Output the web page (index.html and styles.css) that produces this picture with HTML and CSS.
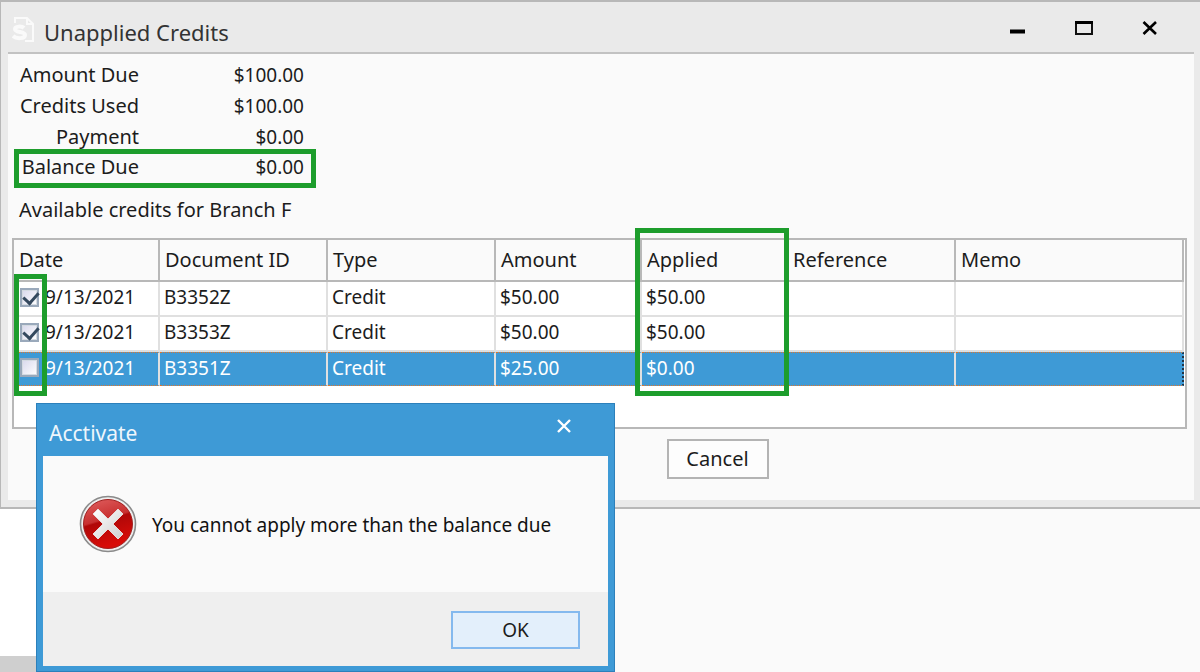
FILE: index.html
```html
<!DOCTYPE html>
<html lang="en">
<head>
  <meta charset="UTF-8" />
  <meta name="viewport" content="width=device-width, initial-scale=1.0"/>
  <title>Unapplied Credits</title>
  <link rel="stylesheet" href="styles.css">
</head>
<body>
  <div class="window">
    <div class="titlebar">
      <svg class="app-icon" width="24" height="28" viewBox="0 0 24 28" fill="none" stroke="#fafafa">
        <path d="M3 7V2h12l6 6v17h-8" stroke-width="2"/>
        <path d="M15 2v6h6" stroke-width="2"/>
        <path d="M12 12c-2-2-9-2-9 1 0 4 10 2 10 6 0 4-9 4-12 1" stroke-width="4"/>
      </svg>
      <h1>Unapplied Credits</h1>
      <div class="controls">
        <button type="button" aria-label="Minimize">
          <svg width="16" height="16"><path d="M0 11.5h15" stroke="#000" stroke-width="4"/></svg>
        </button>
        <button type="button" aria-label="Maximize">
          <svg width="18" height="16"><path d="M1 2v12h16V2" fill="none" stroke="#111" stroke-width="2"/><path d="M0 2.5h18" stroke="#000" stroke-width="3"/></svg>
        </button>
        <button type="button" aria-label="Close">
          <svg width="16" height="16"><path d="M1.5 2l12.500 12M14 2L1.500 14" stroke="#000" stroke-width="2.6"/></svg>
        </button>
      </div>
    </div>

    <div class="content">
      <dl class="summary">
        <div><dt>Amount Due</dt><dd>$100.00</dd></div>
        <div><dt>Credits Used</dt><dd>$100.00</dd></div>
        <div><dt>Payment</dt><dd>$0.00</dd></div>
        <div class="balance"><dt>Balance Due</dt><dd>$0.00</dd></div>
      </dl>
      <p class="caption">Available credits for Branch F</p>

      <div class="grid">
        <table>
          <colgroup>
            <col class="narrow"><col class="wide"><col class="wide"><col class="narrow"><col class="narrow"><col class="wide"><col>
          </colgroup>
          <thead>
            <tr><th>Date</th><th>Document ID</th><th>Type</th><th>Amount</th><th>Applied</th><th>Reference</th><th>Memo</th></tr>
          </thead>
          <tbody>
            <tr>
              <td><label><input type="checkbox" checked>9/13/2021</label></td>
              <td>B3352Z</td><td>Credit</td><td>$50.00</td><td>$50.00</td><td></td><td></td>
            </tr>
            <tr>
              <td><label><input type="checkbox" checked>9/13/2021</label></td>
              <td>B3353Z</td><td>Credit</td><td>$50.00</td><td>$50.00</td><td></td><td></td>
            </tr>
            <tr class="selected">
              <td><label><input type="checkbox">9/13/2021</label></td>
              <td>B3351Z</td><td>Credit</td><td>$25.00</td><td>$0.00</td><td></td><td></td>
            </tr>
          </tbody>
        </table>
        <span class="mark mark-checks"></span>
        <span class="mark mark-applied"></span>
      </div>

      <div class="actions">
        <button type="button" class="btn">Cancel</button>
      </div>
    </div>
  </div>

  <div class="backdrop"><span></span></div>

  <div class="dialog" role="alertdialog" aria-labelledby="dialog-title">
    <div class="dialog-title">
      <h2 id="dialog-title">Acctivate</h2>
      <button type="button" aria-label="Close">
        <svg width="16" height="16"><path d="M2 2l12 12M14 2L2 14" stroke="#fff" stroke-width="2.4"/></svg>
      </button>
    </div>
    <div class="dialog-body">
      <svg width="58" height="58" viewBox="0 0 58 58">
        <defs>
          <linearGradient id="red" x1="0" y1="0" x2="0.3" y2="1">
            <stop offset="0" stop-color="#e06060"/>
            <stop offset="0.48" stop-color="#c83030"/>
            <stop offset="0.52" stop-color="#b00808"/>
            <stop offset="1" stop-color="#d80c08"/>
          </linearGradient>
          <linearGradient id="cross" x1="0" y1="0" x2="1" y2="1">
            <stop offset="0" stop-color="#fff"/>
            <stop offset="1" stop-color="#cfcfcf"/>
          </linearGradient>
        </defs>
        <circle cx="29" cy="29" r="27.500" fill="#eee" stroke="#8a8a8a" stroke-width="1.6"/>
        <circle cx="29" cy="29" r="24.500" fill="url(#red)" stroke="#a02020"/>
        <path d="M19 14l10 10 10-10 5 5-10 10 10 10-5 5-10-10-10 10-5-5 10-10-10-10z" fill="url(#cross)" stroke="#e8dada" stroke-linejoin="round"/>
      </svg>
      <p>You cannot apply more than the balance due</p>
    </div>
    <div class="dialog-footer">
      <button type="button" class="btn btn-primary">OK</button>
    </div>
  </div>
</body>
</html>
```
FILE: styles.css
```css
* {
  box-sizing: border-box;
}
body {
  margin: 0;
  min-height: 100vh;
  display: flex;
  flex-direction: column;
  position: relative;
  font-family: "Noto Sans", "Open Sans", sans-serif;
  font-size: 20px;
  line-height: 26px;
  color: #1c1c1c;
  background: #fafafa;
}
h1, h2, p, dl, dd {
  margin: 0;
}
button {
  font: inherit;
  color: inherit;
  padding: 0;
}

/* main window */
.window {
  background: #eaeaea;
  border: 1px solid #b8b8b8;
  border-top-width: 2px;
  border-bottom-width: 2px;
  border-right: 0;
  padding: 0 6px 7px 7px;
}
.titlebar {
  display: flex;
  height: 52px;
  padding: 5px 0 0 4px;
  border-bottom: 2px solid #c2c2c2;
}
.app-icon {
  margin-top: 9px;
}
.titlebar h1 {
  flex: 1;
  margin: 12px 0 0 8px;
  font-size: 22px;
  font-weight: normal;
  color: #333;
}
.controls {
  display: flex;
  height: 42px;
  margin-right: 11px;
}
.controls button {
  width: 66px;
  display: flex;
  align-items: center;
  justify-content: center;
  border: 0;
  background: none;
}
.content {
  background: #fafafa;
  padding: 8px 7px 21px 4px;
}

/* totals */
.summary {
  width: 304px;
  margin-left: 2px;
}
.summary div {
  display: flex;
  justify-content: space-between;
  height: 31px;
  padding: 0 14px 0 5px;
}
.summary dt {
  width: 120px;
  text-align: right;
}
.summary dd {
  font-size: 19px;
}
.summary .balance {
  height: 39px;
  width: 302px;
  margin-top: -6px;
  padding: 0 7px 0 0;
  border: 5px solid #1d9d2c;
}
.caption {
  margin: 9px 0 15px 7px;
}

/* credits list */
.grid {
  position: relative;
  height: 191px;
  padding-right: 1px;
  background: #fff;
  border: 2px solid #b8b8b8;
}
table {
  width: 100%;
  table-layout: fixed;
  border-collapse: separate;
  border-spacing: 0;
}
.narrow {
  width: 146px;
}
.wide {
  width: 168px;
}
th {
  height: 42px;
  padding: 0 5px;
  text-align: left;
  font-weight: normal;
  background: #fafafa;
  border-right: 2px solid #b8b8b8;
  border-bottom: 2px solid #b8b8b8;
}
td {
  height: 35px;
  padding: 0 4px 3px;
  font-size: 19px;
  border-right: 2px solid #e0e0e0;
  border-bottom: 2px solid #e0e0e0;
}
td label {
  display: flex;
  align-items: center;
  gap: 6px;
  padding-left: 2px;
}
input[type="checkbox"] {
  appearance: none;
  flex: none;
  width: 19px;
  height: 19px;
  margin: 0;
  border: 2px solid #9aa9bb;
  outline: 1px solid #d5dbe2;
  outline-offset: -3px;
  background: linear-gradient(135deg, #d8d8ec, #fff);
}
input[type="checkbox"]:checked {
  position: relative;
}
input[type="checkbox"]:checked::after {
  content: "";
  position: absolute;
  left: 4px;
  top: -1px;
  width: 7px;
  height: 12px;
  border: solid #34495e;
  border-width: 0 3px 3px 0;
  transform: rotate(42deg);
}
.selected td {
  height: 34px;
  color: #fff;
  background: #3e9ad6;
  border-top: 1px dotted #e0762c;
  border-bottom: 1px dotted #e0762c;
}
.selected td:last-child {
  border-right: 2px dotted #234;
}
.mark {
  position: absolute;
  border: 5px solid #1d9d2c;
}
.mark-checks {
  left: 0;
  top: 34px;
  width: 33px;
  height: 122px;
}
.mark-applied {
  left: 621px;
  top: -12px;
  width: 154px;
  height: 168px;
}
.actions {
  display: flex;
  justify-content: center;
  padding-top: 10px;
  padding-left: 236px;
}
.btn {
  width: 102px;
  height: 40px;
  background: #fdfdfd;
  border: 2px solid #b4b4b4;
}

/* area under the window */
.backdrop {
  flex: 1;
  width: 37px;
  display: flex;
  align-items: flex-end;
  background: #fff;
}
.backdrop span {
  flex: 1;
  height: 16px;
  background: #cfcfcf;
}

/* error dialog */
.dialog {
  position: absolute;
  left: 36px;
  top: 403px;
  width: 579px;
  padding: 0 6px 5px;
  background: #3e9ad6;
  border: 1px solid #2c80bb;
}
.dialog-title {
  display: flex;
  justify-content: space-between;
  height: 52px;
  padding: 0 36px 0 6px;
  color: #eef6fc;
}
.dialog-title h2 {
  margin-top: 16px;
  font-size: 21px;
  font-weight: normal;
}
.dialog-title button {
  display: flex;
  align-items: center;
  height: 43px;
  border: 0;
  background: none;
}
.dialog-body {
  display: flex;
  align-items: center;
  gap: 15px;
  height: 136px;
  padding-left: 36px;
  font-size: 19px;
  color: #111;
  background: #fafafa;
}
.dialog-body p {
  padding-top: 2px;
}
.dialog-footer {
  display: flex;
  justify-content: flex-end;
  padding: 19px 28px 17px;
  background: #efefef;
}
.btn-primary {
  width: 129px;
  height: 38px;
  font-size: 19px;
  background: #e3effb;
  border-color: #84b9ee;
}
```
